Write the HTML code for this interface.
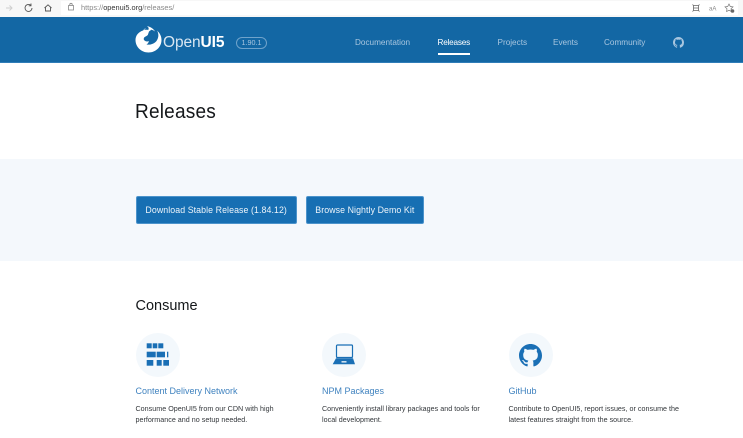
<!DOCTYPE html>
<html><head><meta charset="utf-8">
<style>
html,body{margin:0;padding:0;width:743px;height:438px;overflow:hidden;background:#fff;font-family:"Liberation Sans",sans-serif}
body{filter:blur(.3px)}
.a{position:absolute;white-space:nowrap}
.nav{top:36.500px;font-size:8.200px;line-height:12px;color:#a9c6df}
.btn{background:#176fb3;border:1px solid #4b93cb;border-radius:2px;color:#eef5fb;font-size:8.800px;line-height:26px;height:26px;text-align:center;top:196px;letter-spacing:.08px}
.circ{width:44px;height:44px;border-radius:50%;background:#f3f8fc;top:333px}
.t{top:385px;font-size:9px;line-height:12px;color:#3f82bf}
.d{font-size:7.150px;line-height:11px;color:#32363a;letter-spacing:.02px}
</style></head><body>
<div class="a" style="left:0;top:0;width:743px;height:17px;background:#f7f7f7"></div>
<div class="a" style="left:61px;top:1px;width:637px;height:14px;background:#fff"></div>
<div class="a" style="left:698px;top:1px;width:40px;height:14px;background:#fff"></div>
<svg class="a" style="left:0;top:0" width="120" height="17" viewBox="0 0 120 17" fill="none">
<path d="M6 8h6M9.500 5.500 12 8l-2.500 2.500" stroke="#cfcfcf"/>
<path d="M31 5.500A3.500 3.500 0 1 0 32 8M31 3.500v2.300h-2.300" stroke="#555" stroke-width=".9"/>
<path d="M44.500 8 48 4.800 51.500 8M45.500 7.500V11h5V7.500" stroke="#555" stroke-width=".9"/>
<rect x="68.500" y="5.500" width="5" height="4.500" stroke="#888" stroke-width=".8"/>
<path d="M69.800 5.500V4.500a1.200 1.200 0 0 1 2.400 0v1" stroke="#888" stroke-width=".8"/>
</svg>
<div class="a" style="left:81px;top:3px;font-size:7.400px;line-height:10px;color:#888">https://<span style="color:#333">openui5.org</span>/releases/</div>
<svg class="a" style="left:690px;top:2px" width="50" height="13" viewBox="0 0 50 13" fill="none">
<path d="M3.500 3.500h5v5h-5zM2.500 2.500l1 1M9.500 2.500l-1 1M2.500 9.500l1-1M9.500 9.500l-1-1M3.500 6h5" stroke="#666" stroke-width=".8"/>
<text x="19" y="8.500" font-size="6" fill="#888" font-family="Liberation Sans">aA</text>
<path d="M39 2l1.300 2.500 2.700.4-2 1.900.4 2.700L39 8.300 36.600 9.500 37 6.800 35 4.900l2.700-.4z" stroke="#777" stroke-width=".7"/>
<circle cx="42.500" cy="9" r="1.800" fill="#666"/>
</svg>
<div class="a" style="left:0;top:17px;width:743px;height:46px;background:#1367a4"></div>
<div class="a" style="left:0;top:61.500px;width:743px;height:1.500px;background:#2f7db8"></div>
<svg class="a" style="left:134px;top:25px" width="30" height="29" viewBox="0 0 30 29">
<path fill="#fff" d="M9 5.500C4.500 7 1.500 10.500 1.500 15c0 7 5.800 12.500 13 12.500S27.500 22 27.500 15c0-4-1.800-7-4.500-9.500 1.800 3 2 7-.5 10.500-2.500 3.200-6.500 4-10 3.500 1.500-1 2.200-2 2.300-3.500-1.500.8-3 .5-4.300-.5-1.200-1.100-.8-2.800.3-3.500 1-.7 2-1 3-2l1.200-3.500 2-1.500c-.6-1-1.300-2.200-2.500-3.500.3 1.500.3 2.500-.3 3.500-1.500-.3-3-.3-5 .3 1-1.300 1.300-1.800 2.800-1.800z"/>
<path fill="#fff" d="M13 1c3 .8 6.500 2.500 8 5.500-1.800-1.500-3.500-2-5.500-2C15 3 14 2 13 1z"/>
</svg>
<div class="a" style="left:163px;top:31.500px;font-size:15.500px;line-height:21px;color:#d8e6f1;letter-spacing:-.1px">Open<b style="color:#fff">UI5</b></div>
<div class="a" style="left:236px;top:37px;width:29px;height:10px;border:1px solid #6fa3cb;border-radius:6px;font-size:7.200px;line-height:10px;text-align:center;color:#a9c6df">1.90.1</div>
<div class="a nav" style="left:355px">Documentation</div>
<div class="a nav" style="left:437.500px;color:#fff;letter-spacing:-.2px">Releases</div>
<div class="a" style="left:437.500px;top:53px;width:32.500px;height:1.500px;background:#fff"></div>
<div class="a nav" style="left:497.500px">Projects</div>
<div class="a nav" style="left:553px">Events</div>
<div class="a nav" style="left:604px">Community</div>
<svg class="a" style="left:673px;top:37px" width="11" height="11" viewBox="0 0 16 16"><path fill="#a9c6df" d="M8 0C3.580 0 0 3.580 0 8c0 3.540 2.290 6.530 5.470 7.590.4.070.55-.17.55-.38 0-.19-.01-.82-.01-1.490-2.010.37-2.530-.49-2.690-.94-.09-.23-.48-.94-.82-1.130-.28-.15-.68-.52-.01-.53.63-.01 1.080.58 1.230.82.72 1.210 1.870.87 2.330.66.070-.52.28-.87.51-1.070-1.780-.2-3.640-.89-3.640-3.950 0-.87.31-1.590.82-2.150-.08-.2-.36-1.020.08-2.120 0 0 .67-.21 2.200.82.64-.18 1.320-.27 2-.27s1.360.09 2 .27c1.530-1.040 2.200-.82 2.200-.82.44 1.100.16 1.920.08 2.120.51.56.82 1.270.82 2.150 0 3.070-1.870 3.750-3.650 3.950.29.25.54.73.54 1.480 0 1.070-.01 1.930-.01 2.200 0 .21.15.46.55.38A8.013 8.013 0 0 0 16 8c0-4.420-3.580-8-8-8z"/></svg>
<div class="a" style="left:135px;top:99px;font-size:20.500px;line-height:26px;color:#14171a;transform:scaleX(.93);transform-origin:left center;letter-spacing:.2px">Releases</div>
<div class="a" style="left:0;top:159px;width:743px;height:102px;background:#f4f8fc"></div>
<div class="a btn" style="left:135.700px;width:159px">Download Stable Release (1.84.12)</div>
<div class="a btn" style="left:305.700px;width:116.300px">Browse Nightly Demo Kit</div>
<div class="a" style="left:135.500px;top:297px;font-size:14.500px;line-height:19px;color:#14171a">Consume</div>
<div class="a circ" style="left:136px"></div>
<svg class="a" style="left:146px;top:343px" width="24" height="24" fill="#1a6fb5">
<rect x=".7" y=".3" width="5" height="5"/><rect x="6.700" y=".3" width="4.600" height="5"/><rect x="12.300" y=".3" width="5" height="5"/>
<rect x=".7" y="8.700" width="9" height="5.600"/><rect x="10.700" y="8.700" width="8.300" height="5.600"/><rect x="21" y="8.700" width="1.300" height="5.600"/>
<rect x=".7" y="17" width="6.600" height="5.700"/><rect x="10.700" y="17" width="5" height="5.700"/><rect x="17.300" y="17" width="5.700" height="5.700"/>
</svg>
<div class="a t" style="left:135.500px">Content Delivery Network</div>
<div class="a d" style="left:135.500px;top:403.500px">Consume OpenUI5 from our CDN with high<br>performance and no setup needed.</div>
<div class="a circ" style="left:322px"></div>
<svg class="a" style="left:332px;top:343px" width="24" height="24">
<rect x="4.500" y="2" width="16" height="12.500" rx="1" fill="none" stroke="#1a6fb5" stroke-width="1.200"/>
<path d="M4 15.300h17l2 6H.7z" fill="#1a6fb5"/>
<rect x="9.500" y="18" width="5" height="1.600" fill="#cfe0ee"/>
</svg>
<div class="a t" style="left:322px">NPM Packages</div>
<div class="a d" style="left:322px;top:403.500px">Conveniently install library packages and tools for<br>local development.</div>
<div class="a circ" style="left:508.500px"></div>
<svg class="a" style="left:519px;top:343.500px" width="23" height="23" viewBox="0 0 16 16"><path fill="#1a6fb5" d="M8 0C3.580 0 0 3.580 0 8c0 3.540 2.290 6.530 5.470 7.590.4.070.55-.17.55-.38 0-.19-.01-.82-.01-1.490-2.010.37-2.530-.49-2.690-.94-.09-.23-.48-.94-.82-1.130-.28-.15-.68-.52-.01-.53.63-.01 1.080.58 1.230.82.72 1.210 1.870.87 2.330.66.070-.52.28-.87.51-1.070-1.780-.2-3.640-.89-3.640-3.950 0-.87.31-1.590.82-2.150-.08-.2-.36-1.020.08-2.120 0 0 .67-.21 2.200.82.64-.18 1.320-.27 2-.27s1.360.09 2 .27c1.530-1.040 2.200-.82 2.200-.82.44 1.100.16 1.920.08 2.120.51.56.82 1.270.82 2.150 0 3.070-1.870 3.750-3.650 3.950.29.25.54.73.54 1.480 0 1.070-.01 1.930-.01 2.200 0 .21.15.46.55.38A8.013 8.013 0 0 0 16 8c0-4.420-3.580-8-8-8z"/></svg>
<div class="a t" style="left:508.500px">GitHub</div>
<div class="a d" style="left:508.500px;top:403.500px">Contribute to OpenUI5, report issues, or consume the<br>latest features straight from the source.</div>
</body></html>
